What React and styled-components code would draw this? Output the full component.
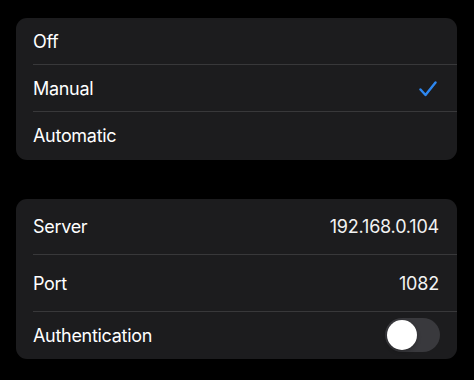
import styled, { createGlobalStyle } from 'styled-components'
import { useState } from 'react'

const GlobalStyle = createGlobalStyle`
  html, body {
    margin: 0;
    padding: 0;
    background: #000;
  }
  body {
    font-family: Inter, "Noto Sans", "Liberation Sans", sans-serif;
    -webkit-font-smoothing: antialiased;
  }
`

const modes = ['Off', 'Manual', 'Automatic']

const App = () => {
  const [mode, setMode] = useState('Manual')
  const [auth, setAuth] = useState(false)

  return (
    <>
      <GlobalStyle />
      <Page>
        <Card>
          {modes.map((m, i) => (
            <Row key={m} $height={i === 2 ? 48 : 47} onClick={() => setMode(m)}>
              <RowContent $divider={i < modes.length - 1}>
                <Label>{m}</Label>
                {mode === m && (
                  <Check viewBox="0 0 18 16">
                    <path d="M1.5 8.5 L6.5 14 L16.5 1.5" />
                  </Check>
                )}
              </RowContent>
            </Row>
          ))}
        </Card>
        <Card>
          <Row $height={56}>
            <RowContent $divider>
              <Label>Server</Label>
              <Value>192.168.0.104</Value>
            </RowContent>
          </Row>
          <Row $height={57}>
            <RowContent $divider>
              <Label>Port</Label>
              <Value>1082</Value>
            </RowContent>
          </Row>
          <Row $height={47}>
            <RowContent>
              <Label>Authentication</Label>
              <Toggle $on={auth} onClick={() => setAuth(!auth)}>
                <Knob $on={auth} />
              </Toggle>
            </RowContent>
          </Row>
        </Card>
      </Page>
    </>
  )
}

export default App

const Page = styled.div`
  width: 474px;
  height: 380px;
  box-sizing: border-box;
  padding: 18px 17px 0 16px;
  display: flex;
  flex-direction: column;
  gap: 39px;
`

const Card = styled.div`
  background: #1c1c1e;
  border-radius: 11px;
  overflow: hidden;
  display: flex;
  flex-direction: column;
`

const Row = styled.div`
  height: ${p => p.$height}px;
  padding-left: 17px;
  display: flex;
  cursor: default;
`

const RowContent = styled.div`
  flex: 1;
  display: flex;
  align-items: center;
  justify-content: space-between;
  padding-right: 18px;
  border-bottom: ${p => (p.$divider ? '1px solid #38383a' : 'none')};
  margin-bottom: ${p => (p.$divider ? '0' : '1px')};
`

const Label = styled.span`
  color: #fff;
  font-size: 18px;
  letter-spacing: -0.3px;
`

const Value = styled.span`
  color: #f2f2f2;
  font-size: 18px;
  letter-spacing: -0.2px;
`

const Check = styled.svg`
  width: 18px;
  height: 16px;
  margin-top: 2px;
  margin-right: 2px;
  fill: none;
  stroke: #2d87f0;
  stroke-width: 2.4;
  stroke-linecap: round;
  stroke-linejoin: round;
`

const Toggle = styled.div`
  width: 55px;
  height: 34px;
  border-radius: 17px;
  background: ${p => (p.$on ? '#30d158' : '#39393d')};
  position: relative;
  margin-right: -1px;
`

const Knob = styled.div`
  position: absolute;
  top: 2px;
  left: ${p => (p.$on ? '23px' : '2px')};
  width: 30px;
  height: 30px;
  border-radius: 50%;
  background: #fff;
  box-shadow: 0 2px 4px rgba(0, 0, 0, 0.25);
`
